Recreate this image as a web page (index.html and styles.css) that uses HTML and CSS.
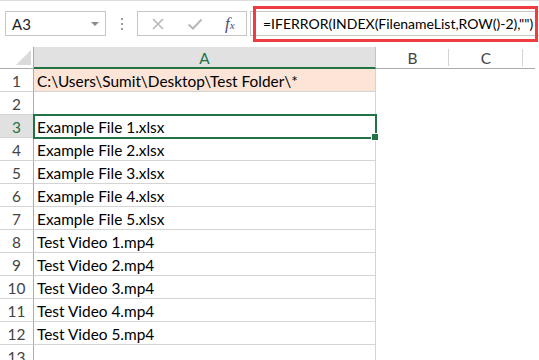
FILE: index.html
```html
<!DOCTYPE html>
<html lang="en">

<head>
    <meta charset="UTF-8">
    <title>Filename List</title>
    <link rel="stylesheet" href="styles.css">
</head>

<body>
    <div class="sheet">
        <div class="formula-bar">
            <div class="name-box">
                <span>A3</span>
                <span class="caret"></span>
            </div>
            <div class="grip"><i></i><i></i><i></i></div>
            <div class="fx-box">
                <svg class="ico" width="14" height="14" viewBox="0 0 14 14">
                    <path d="M2 2 L12 12 M12 2 L2 12" stroke="#b8b8b8" stroke-width="1.6" fill="none"/>
                </svg>
                <svg class="ico" width="16" height="14" viewBox="0 0 16 14">
                    <path d="M1.5 7.5 L6 11.5 L14.5 2.5" stroke="#b8b8b8" stroke-width="2" fill="none"/>
                </svg>
                <span class="fx">f<small>x</small></span>
            </div>
            <div class="formula-input">
                <span>=IFERROR(INDEX(FilenameList,ROW()-2),"")</span>
                <div class="callout"></div>
            </div>
        </div>

        <div class="grid">
            <div class="row head">
                <div class="rh corner"><span class="tri"></span></div>
                <div class="ch col-a">A</div>
                <div class="ch col-b">B</div>
                <div class="ch col-c">C</div>
                <div class="ch col-rest"></div>
            </div>
            <div class="row">
                <div class="rh">1</div>
                <div class="cell col-a path">C:\Users\Sumit\Desktop\Test Folder\*</div>
            </div>
            <div class="row">
                <div class="rh">2</div>
                <div class="cell col-a"></div>
            </div>
            <div class="row">
                <div class="rh active">3</div>
                <div class="cell col-a selected">Example File 1.xlsx<span class="handle"></span></div>
            </div>
            <div class="row">
                <div class="rh">4</div>
                <div class="cell col-a">Example File 2.xlsx</div>
            </div>
            <div class="row">
                <div class="rh">5</div>
                <div class="cell col-a">Example File 3.xlsx</div>
            </div>
            <div class="row">
                <div class="rh">6</div>
                <div class="cell col-a">Example File 4.xlsx</div>
            </div>
            <div class="row">
                <div class="rh">7</div>
                <div class="cell col-a">Example File 5.xlsx</div>
            </div>
            <div class="row">
                <div class="rh">8</div>
                <div class="cell col-a">Test Video 1.mp4</div>
            </div>
            <div class="row">
                <div class="rh">9</div>
                <div class="cell col-a">Test Video 2.mp4</div>
            </div>
            <div class="row">
                <div class="rh">10</div>
                <div class="cell col-a">Test Video 3.mp4</div>
            </div>
            <div class="row">
                <div class="rh">11</div>
                <div class="cell col-a">Test Video 4.mp4</div>
            </div>
            <div class="row">
                <div class="rh">12</div>
                <div class="cell col-a">Test Video 5.mp4</div>
            </div>
            <div class="row">
                <div class="rh">13</div>
                <div class="cell col-a"></div>
            </div>
        </div>
    </div>
</body>

</html>
```

FILE: styles.css
```css
body {
    margin: 0;
    background-color: #fff;
    font-family: Lato, "Liberation Sans", sans-serif;
    font-size: 15px;
    color: #000;
    overflow: hidden;
}

.sheet {
    width: 539px;
    height: 360px;
    overflow: hidden;
    border-top: 1px solid #dcdcdc;
    box-sizing: border-box;
}

/* formula bar */

.formula-bar {
    display: flex;
    align-items: flex-start;
    height: 46px;
    padding: 10px 0 0 5px;
    box-sizing: border-box;
}

.name-box {
    flex: none;
    width: 101px;
    height: 25px;
    border: 1px solid #c6c6c6;
    box-sizing: border-box;
    display: flex;
    align-items: center;
    justify-content: space-between;
    padding: 0 6px 0 6px;
    color: #222;
}

.caret {
    width: 0;
    height: 0;
    border-left: 4px solid transparent;
    border-right: 4px solid transparent;
    border-top: 4px solid #8a8a8a;
}

.grip {
    flex: none;
    width: 31px;
    height: 25px;
    display: flex;
    flex-direction: column;
    align-items: center;
    justify-content: center;
    gap: 3px;
}

.grip i {
    width: 2px;
    height: 2px;
    background-color: #9a9a9a;
}

.fx-box {
    flex: none;
    width: 110px;
    height: 25px;
    border: 1px solid #c6c6c6;
    box-sizing: border-box;
    display: flex;
    align-items: center;
    padding-left: 13px;
    gap: 22px;
}

.fx {
    font-family: "Liberation Serif", serif;
    font-style: italic;
    font-size: 17px;
    color: #4d4d73;
}

.fx small {
    font-size: 11px;
}

.formula-input {
    position: relative;
    flex: 1;
    min-width: 0;
    height: 25px;
    margin-left: 3px;
    border: 1px solid #c6c6c6;
    border-right: none;
    box-sizing: border-box;
    display: flex;
    align-items: center;
    padding-left: 12px;
    white-space: nowrap;
    font-size: 14px;
}

.callout {
    position: absolute;
    left: 2px;
    top: -6px;
    right: 1px;
    height: 36px;
    border: 3px solid #ef3c40;
    box-sizing: border-box;
}

/* grid */

.grid {
    font-size: 15.4px;
}

.row {
    display: flex;
    height: 23px;
}

.rh {
    flex: none;
    width: 34px;
    border-right: 1px solid #ababab;
    border-bottom: 1px solid #d4d4d4;
    color: #444;
    display: flex;
    align-items: center;
    justify-content: center;
    padding-top: 1px;
    box-sizing: border-box;
}

.rh.active {
    background-color: #e1e1e1;
    color: #217346;
}

.cell {
    box-sizing: border-box;
    border-right: 1px solid #d4d4d4;
    border-bottom: 1px solid #d4d4d4;
    padding: 1px 0 0 3px;
    display: flex;
    align-items: center;
    white-space: nowrap;
    position: relative;
}

.col-a {
    width: 342px;
    flex: none;
}

.path {
    background-color: #fce4d6;
}

.selected {
    outline: 2px solid #217346;
    outline-offset: -1px;
    z-index: 1;
}

.handle {
    position: absolute;
    right: -4px;
    bottom: -4px;
    width: 6px;
    height: 6px;
    background-color: #217346;
    border: 1px solid #fff;
}

.head {
    height: 22px;
}

.corner {
    border-bottom: 1px solid #ababab;
    position: relative;
}

.tri {
    position: absolute;
    right: 2px;
    bottom: 3px;
    width: 0;
    height: 0;
    border-left: 15px solid transparent;
    border-bottom: 15px solid #dadada;
}

.ch {
    flex: none;
    box-sizing: border-box;
    border-bottom: 1px solid #ababab;
    color: #444;
    display: flex;
    align-items: center;
    justify-content: center;
    padding-top: 1px;
    position: relative;
}

.ch.col-a {
    background-color: #e1e1e1;
    border-right: 1px solid #c4c4c4;
    border-bottom: 2px solid #217346;
    color: #217346;
}

.col-b {
    width: 73px;
}

.col-c {
    width: 74px;
}

.col-b::after,
.col-c::after {
    content: "";
    position: absolute;
    right: 0;
    top: 2px;
    bottom: 2px;
    width: 1px;
    background-color: #d4d4d4;
}

.col-rest {
    width: 12px;
}
```
